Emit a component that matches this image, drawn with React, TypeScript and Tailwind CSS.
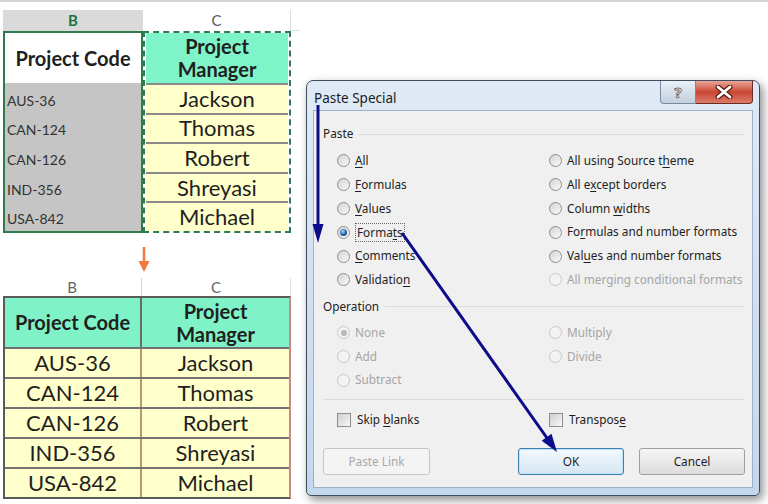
import React from "react";

const codes = ["AUS-36", "CAN-124", "CAN-126", "IND-356", "USA-842"];
const names = ["Jackson", "Thomas", "Robert", "Shreyasi", "Michael"];

const U = ({ children }: { children: React.ReactNode }) => (
  <span className="underline underline-offset-[2px]">{children}</span>
);

function Radio({
  checked,
  disabled,
  focus,
  children,
}: {
  checked?: boolean;
  disabled?: boolean;
  focus?: boolean;
  children: React.ReactNode;
}) {
  return (
    <div className="flex h-[23.8px] items-center gap-[5px]">
      <span
        className={
          disabled
            ? "flex size-[13px] shrink-0 items-center justify-center rounded-full border border-[#c8c8c8] bg-[#f3f3f3]"
            : "flex size-[13px] shrink-0 items-center justify-center rounded-full border border-[#8e8e8e] bg-gradient-to-br from-[#d2d2d2] to-[#fbfbfb]"
        }
      >
        {checked &&
          (disabled ? (
            <span className="size-[6px] rounded-full bg-[#b8b8b8]" />
          ) : (
            <span className="size-[7px] rounded-full bg-[radial-gradient(circle_at_40%_35%,#a8dcff,#1c5f9e_55%,#0b3a6b)]" />
          ))}
      </span>
      <span
        className={
          (disabled ? "text-[#a5a5a5]" : "text-[#1e1e1e]") +
          (focus ? " border border-dotted border-[#6a6a6a] px-[1px] leading-[17px]" : "")
        }
      >
        {children}
      </span>
    </div>
  );
}

function Check({ children }: { children: React.ReactNode }) {
  return (
    <div className="flex h-[24px] items-center gap-[6px]">
      <span className="size-[14px] shrink-0 border border-[#8e8e8e] bg-gradient-to-br from-[#d0d0d0] to-[#f8f8f8]" />
      <span className="text-[#1e1e1e]">{children}</span>
    </div>
  );
}

function GroupLabel({ children }: { children: React.ReactNode }) {
  return (
    <div className="flex h-[24px] items-center pr-[7px]">
      <span className="text-[#1e1e1e]">{children}</span>
      <span className="ml-[6px] h-px flex-1 bg-[#dcdcdc]" />
    </div>
  );
}

export default function App() {
  return (
    <div className="relative flex h-[504px] w-[768px] overflow-hidden border-t-2 border-[#d4d4d4] bg-white">
      {/* spreadsheet side */}
      <div className="flex w-[300px] shrink-0 flex-col pl-[3px] pt-[8px] font-['Lato',sans-serif] text-[#1f1f1f]">
        <div className="flex h-[21px]">
          <div className="flex w-[140px] items-center justify-center bg-[#dadada] text-[15px] font-bold text-[#217346]">
            B
          </div>
          <div className="flex w-[148px] items-center justify-center border-r border-[#dedede] text-[15px] text-[#5a5a5a]">
            C
          </div>
          <div className="w-[9px] border-b border-[#dedede]" />
        </div>

        <div className="flex h-[202px] w-[288px]">
          <div className="flex w-[140px] flex-col border-2 border-[#2f7a4f]">
            <div className="flex h-[50px] items-center justify-center bg-white text-[20px] font-bold">
              Project Code
            </div>
            <div className="flex flex-1 flex-col bg-[#c5c5c5]">
              {codes.map((c) => (
                <div key={c} className="flex flex-1 items-center pl-[2px] pt-[5px] text-[14px] text-[#333]">
                  {c}
                </div>
              ))}
            </div>
          </div>
          <div className="flex w-[148px] flex-col border-2 border-dashed border-[#2f7a4f] px-[1px]">
            <div className="flex h-[50px] flex-col items-center justify-center bg-[#7ff4c8] text-[20px] font-bold leading-[23px]">
              <span>Project</span>
              <span>Manager</span>
            </div>
            {names.map((n) => (
              <div
                key={n}
                className="flex flex-1 items-center justify-center border-t-2 border-[#8a8a8a] bg-[#ffffcc] text-[22px] leading-none"
              >
                {n}
              </div>
            ))}
          </div>
        </div>

        <div className="flex h-[45px] w-[288px] items-start pl-[134px] pt-[14px]">
          <svg width="14" height="26" viewBox="0 0 14 26">
            <line x1="7" y1="0" x2="7" y2="15" stroke="#f47a3a" strokeWidth="2.5" />
            <polygon points="1.5,14 12.5,14 7,25" fill="#f47a3a" />
          </svg>
        </div>

        <div className="flex h-[18px] w-[288px] text-[15px] leading-none text-[#666]">
          <div className="flex w-[139px] items-center justify-center border-r border-[#d6d6d6]">B</div>
          <div className="flex flex-1 items-center justify-center border-r border-[#e2e2e2]">C</div>
        </div>

        <div className="flex w-[288px] flex-col border-2 border-[#5b5b5b] border-r-[#c98787]">
          <div className="grid h-[49px] grid-cols-[137px_1fr] bg-[#80f2c7] text-[20px] font-bold leading-[23px]">
            <div className="flex items-center justify-center border-r-2 border-[#6b6b6b]">Project Code</div>
            <div className="flex flex-col items-center justify-center">
              <span>Project</span>
              <span>Manager</span>
            </div>
          </div>
          {codes.map((c, i) => (
            <div
              key={c}
              className="grid h-[30px] grid-cols-[137px_1fr] border-t-2 border-[#727272] bg-[#ffffcc] text-[22px] leading-none"
            >
              <div className="flex items-center justify-center border-r-2 border-[#b59a76]">{c}</div>
              <div className="flex items-center justify-center">{names[i]}</div>
            </div>
          ))}
        </div>
      </div>

      {/* dialog */}
      <div className="flex flex-1 flex-col pl-[6px] pt-[78px] font-['Noto_Sans',sans-serif] text-[11.8px]">
        <div className="flex h-[416px] w-[454px] flex-col rounded-t-[7px] rounded-b-[5px] border border-[#3e4d5e] bg-gradient-to-b from-[#dfeaf6] to-[#c3d7ed] px-[6px] pb-[7px] shadow-[3px_4px_10px_rgba(0,0,0,0.45)]">
          <div className="flex h-[29px] items-start justify-between">
            <div className="pl-[1px] pt-[7px] text-[13.5px] text-[#1b1b1b]">Paste Special</div>
            <div className="flex h-[23px]">
              <div className="flex w-[36px] items-center justify-center rounded-bl-[4px] border border-t-0 border-[#7a8a9c] bg-gradient-to-b from-[#e9f0f7] to-[#c3d1df] text-[15px] font-bold text-white [-webkit-text-stroke:1px_#707070]">
                ?
              </div>
              <div className="flex w-[57px] items-center justify-center rounded-br-[4px] border border-l-0 border-t-0 border-[#6e2b22] bg-gradient-to-b from-[#e9a598] via-[#c74532] to-[#dc7b6a]">
                <svg width="18" height="14" viewBox="0 0 18 14">
                  <path d="M3 2 L15 12 M15 2 L3 12" stroke="#5a1d16" strokeWidth="5" strokeLinecap="round" />
                  <path d="M3 2 L15 12 M15 2 L3 12" stroke="#ffffff" strokeWidth="2.8" strokeLinecap="round" />
                </svg>
              </div>
            </div>
          </div>

          <div className="flex flex-1 flex-col border border-[#9db2c9] bg-[#f0f0f0] pl-[9px] pt-[11px]">
            <GroupLabel>Paste</GroupLabel>
            <div className="ml-[14px] mt-[3px] grid grid-cols-[212px_1fr]">
              <Radio><U>A</U>ll</Radio>
              <Radio>All using Source t<U>h</U>eme</Radio>
              <Radio><U>F</U>ormulas</Radio>
              <Radio>All e<U>x</U>cept borders</Radio>
              <Radio><U>V</U>alues</Radio>
              <Radio>Column <U>w</U>idths</Radio>
              <Radio checked focus>Forma<U>t</U>s</Radio>
              <Radio>Fo<U>r</U>mulas and number formats</Radio>
              <Radio><U>C</U>omments</Radio>
              <Radio>Val<U>u</U>es and number formats</Radio>
              <Radio>Validatio<U>n</U></Radio>
              <Radio disabled>All merging conditional formats</Radio>
            </div>

            <div className="mt-[3px]">
              <GroupLabel>Operation</GroupLabel>
            </div>
            <div className="ml-[14px] mt-[2px] grid grid-cols-[212px_1fr]">
              <Radio disabled checked>None</Radio>
              <Radio disabled>Multiply</Radio>
              <Radio disabled>Add</Radio>
              <Radio disabled>Divide</Radio>
              <Radio disabled>Subtract</Radio>
              <div />
            </div>

            <div className="mr-[7px] mt-[7px] h-px bg-[#dcdcdc]" />

            <div className="ml-[14px] mt-[8px] grid grid-cols-[212px_1fr]">
              <Check>Skip <U>b</U>lanks</Check>
              <Check>Transpos<U>e</U></Check>
            </div>

            <div className="mr-[7px] mt-[16px] flex h-[27px] items-stretch">
              <div className="flex w-[107px] items-center justify-center rounded-[3px] border border-[#c6c6c6] bg-[#f4f4f4] text-[#a8a8a8]">
                Paste Link
              </div>
              <div className="ml-auto flex w-[106px] items-center justify-center rounded-[3px] border border-[#3c7fb1] bg-gradient-to-b from-[#f3f9fd] to-[#d6e6f2] text-[#1e1e1e] shadow-[inset_0_0_0_1px_#bfe3f7]">
                OK
              </div>
              <div className="ml-[15px] flex w-[106px] items-center justify-center rounded-[3px] border border-[#a0a0a0] bg-gradient-to-b from-[#f6f6f6] to-[#dcdcdc] text-[#1e1e1e]">
                Cancel
              </div>
            </div>
          </div>
        </div>
      </div>

      {/* annotation arrows */}
      <svg className="pointer-events-none absolute left-0 top-0" width="768" height="504">
        <line x1="318" y1="103" x2="318" y2="224" stroke="#0c0c8a" strokeWidth="3" />
        <polygon points="312.5,222 323.5,222 318,241" fill="#0c0c8a" />
        <line x1="402" y1="231" x2="547" y2="436" stroke="#0c0c8a" strokeWidth="3" />
        <polygon points="541.7,438.8 551.5,431.8 557,450" fill="#0c0c8a" />
      </svg>
    </div>
  );
}
